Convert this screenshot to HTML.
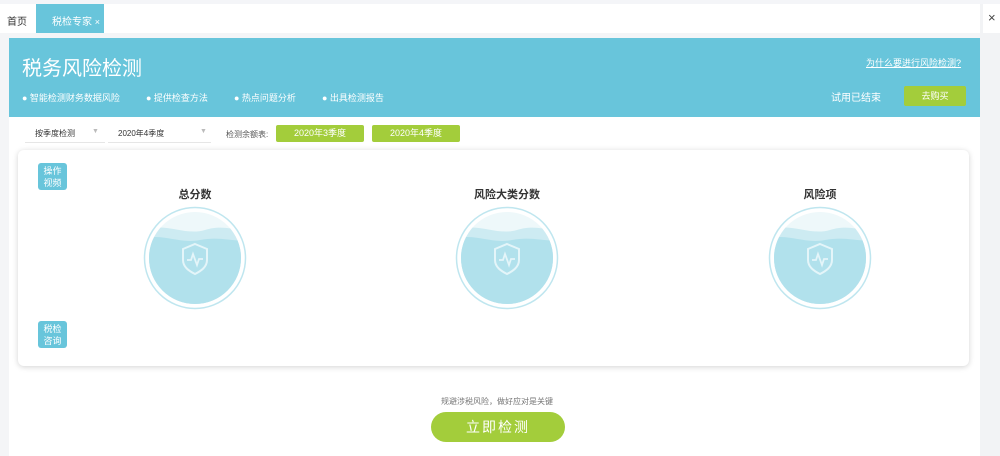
<!DOCTYPE html><html><head><meta charset="utf-8"><style>
*{margin:0;padding:0;box-sizing:border-box}
body{width:1000px;height:456px;overflow:hidden;background:#fff;font-family:"Liberation Sans","Noto Sans CJK SC",sans-serif;position:relative}
.a{position:absolute}
.t{font-size:11px;color:#555;white-space:nowrap}
.w{color:#fff}
.g{background:#a3cd3b;color:#fff;font-size:10px;text-align:center;border-radius:2px}
.title{font-size:11px;font-weight:bold;color:#333;text-align:center;width:120px}
</style></head><body>
<div class="a" style="left:0;top:0;width:1000px;height:4px;background:#f4f5f8"></div>
<div class="a" style="left:980px;top:4px;width:20px;height:452px;background:#f2f3f5"></div>
<div class="a" style="left:983px;top:4px;width:17px;height:29px;background:#fff"></div>
<div class="a t" style="left:988px;top:10px;font-size:13px;color:#444">×</div>
<div class="a" style="left:0;top:33px;width:980px;height:5px;background:#f4f5f7"></div>
<div class="a" style="left:0;top:38px;width:9px;height:418px;background:#f4f5f7"></div>
<div class="a t" style="left:7px;top:13px;font-size:10px;color:#333">首页</div>
<div class="a" style="left:36px;top:4px;width:68px;height:29px;background:#68c5db"></div>
<div class="a t w" style="left:52px;top:13px;font-size:10px">税检专家 <span style="font-size:9px">×</span></div>
<div class="a" style="left:9px;top:38px;width:971px;height:79px;background:#68c5db"></div>
<div class="a w" style="left:22px;top:52px;font-size:20px;white-space:nowrap">税务风险检测</div>
<div class="a t w" style="left:22px;top:91px;font-size:9px">● 智能检测财务数据风险</div>
<div class="a t w" style="left:146px;top:91px;font-size:9px">● 提供检查方法</div>
<div class="a t w" style="left:234px;top:91px;font-size:9px">● 热点问题分析</div>
<div class="a t w" style="left:322px;top:91px;font-size:9px">● 出具检测报告</div>
<div class="a t w" style="left:866px;top:56px;font-size:9px;text-decoration:underline">为什么要进行风险检测?</div>
<div class="a t w" style="left:831px;top:89px;font-size:10px">试用已结束</div>
<div class="a g" style="left:904px;top:86px;width:62px;height:20px;line-height:20px;font-size:9px">去购买</div>
<div class="a" style="left:25px;top:125px;width:80px;height:18px;border-bottom:1px solid #e6e6e6"></div>
<div class="a t" style="left:35px;top:128px;font-size:8px;color:#333">按季度检测</div>
<div class="a t" style="left:92px;top:128px;font-size:7px;color:#bbb">▼</div>
<div class="a" style="left:108px;top:125px;width:103px;height:18px;border-bottom:1px solid #e6e6e6"></div>
<div class="a t" style="left:118px;top:128px;font-size:8px;color:#333">2020年4季度</div>
<div class="a t" style="left:200px;top:128px;font-size:7px;color:#bbb">▼</div>
<div class="a t" style="left:226px;top:129px;font-size:8px;color:#555">检测余额表:</div>
<div class="a g" style="left:276px;top:125px;width:88px;height:17px;line-height:17px;font-size:9px">2020年3季度</div>
<div class="a g" style="left:372px;top:125px;width:88px;height:17px;line-height:17px;font-size:9px">2020年4季度</div>
<div class="a" style="left:18px;top:150px;width:951px;height:216px;background:#fff;border-radius:6px;box-shadow:0 1px 6px rgba(0,0,0,.18)"></div>
<div class="a w" style="left:38px;top:163px;width:29px;height:27px;background:#68c5db;border-radius:3px;font-size:9px;line-height:12px;text-align:center;padding-top:2px">操作<br>视频</div>
<div class="a w" style="left:38px;top:321px;width:29px;height:27px;background:#68c5db;border-radius:3px;font-size:9px;line-height:12px;text-align:center;padding-top:2px">税检<br>咨询</div>
<div class="a title" style="left:135px;top:186px">总分数</div>
<div class="a title" style="left:447px;top:186px">风险大类分数</div>
<div class="a title" style="left:760px;top:186px">风险项</div>
<svg class="a" style="left:0;top:0" width="1000" height="456">
<defs><symbol id="c" viewBox="-52 -52 104 104">
<clipPath id="cp"><circle r="46"/></clipPath>
<circle r="50.5" fill="#fff" stroke="#bfe6ef" stroke-width="1.5"/>
<circle r="46" fill="#eef8fa"/>
<g clip-path="url(#cp)">
<path d="M-50 -28 C-30 -36 -10 -22 10 -28 C30 -34 40 -26 50 -30 L50 50 L-50 50Z" fill="#cdebf2"/>
<path d="M-50 -20 C-30 -24 -15 -14 5 -18 C25 -22 38 -16 50 -18 L50 50 L-50 50Z" fill="#b1e1ec"/>
</g>
<path d="M0 -14 L12 -9 L12 2 C12 9 6 13 0 16 C-6 13 -12 9 -12 2 L-12 -9Z" fill="none" stroke="#e4f5f9" stroke-width="2"/>
<path d="M-8 2 L-4 2 L-2 -4 L2 7 L4 1 L8 1" fill="none" stroke="#e4f5f9" stroke-width="1.8"/>
</symbol></defs>
<use href="#c" x="143" y="206" width="104" height="104"/>
<use href="#c" x="455" y="206" width="104" height="104"/>
<use href="#c" x="768" y="206" width="104" height="104"/>
</svg>
<div class="a t" style="left:441px;top:396px;font-size:8px;color:#777">规避涉税风险，做好应对是关键</div>
<div class="a" style="left:431px;top:412px;width:134px;height:30px;border-radius:15px;background:#a3cd3b;color:#fff;font-size:14px;text-align:center;line-height:30px;letter-spacing:2px">立即检测</div>
</body></html>
